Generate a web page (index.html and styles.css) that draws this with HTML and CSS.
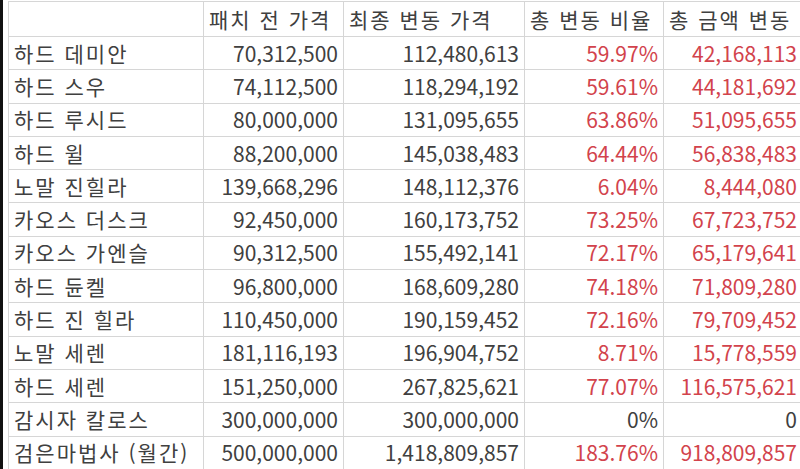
FILE: index.html
```html
<!DOCTYPE html>
<html lang="ko">
<head>
<meta charset="utf-8">
<link rel="stylesheet" href="styles.css">
</head>
<body>
<div class="page">
  <div class="edge"></div>
  <div class="gap"></div>
  <table class="sheet">
    <colgroup>
      <col class="c1"><col class="c2"><col class="c3"><col class="c4"><col class="c5">
    </colgroup>
    <thead>
      <tr><th></th><th>패치 전 가격</th><th>최종 변동 가격</th><th>총 변동 비율</th><th>총 금액 변동</th></tr>
    </thead>
    <tbody>
      <tr><td class="name">하드 데미안</td><td>70,312,500</td><td>112,480,613</td><td class="red">59.97%</td><td class="red">42,168,113</td></tr>
      <tr><td class="name">하드 스우</td><td>74,112,500</td><td>118,294,192</td><td class="red">59.61%</td><td class="red">44,181,692</td></tr>
      <tr><td class="name">하드 루시드</td><td>80,000,000</td><td>131,095,655</td><td class="red">63.86%</td><td class="red">51,095,655</td></tr>
      <tr><td class="name">하드 윌</td><td>88,200,000</td><td>145,038,483</td><td class="red">64.44%</td><td class="red">56,838,483</td></tr>
      <tr><td class="name">노말 진힐라</td><td>139,668,296</td><td>148,112,376</td><td class="red">6.04%</td><td class="red">8,444,080</td></tr>
      <tr><td class="name">카오스 더스크</td><td>92,450,000</td><td>160,173,752</td><td class="red">73.25%</td><td class="red">67,723,752</td></tr>
      <tr><td class="name">카오스 가엔슬</td><td>90,312,500</td><td>155,492,141</td><td class="red">72.17%</td><td class="red">65,179,641</td></tr>
      <tr><td class="name">하드 듄켈</td><td>96,800,000</td><td>168,609,280</td><td class="red">74.18%</td><td class="red">71,809,280</td></tr>
      <tr><td class="name">하드 진 힐라</td><td>110,450,000</td><td>190,159,452</td><td class="red">72.16%</td><td class="red">79,709,452</td></tr>
      <tr><td class="name">노말 세렌</td><td>181,116,193</td><td>196,904,752</td><td class="red">8.71%</td><td class="red">15,778,559</td></tr>
      <tr><td class="name">하드 세렌</td><td>151,250,000</td><td>267,825,621</td><td class="red">77.07%</td><td class="red">116,575,621</td></tr>
      <tr><td class="name">감시자 칼로스</td><td>300,000,000</td><td>300,000,000</td><td>0%</td><td>0</td></tr>
      <tr><td class="name">검은마법사 (월간)</td><td>500,000,000</td><td>1,418,809,857</td><td class="red">183.76%</td><td class="red">918,809,857</td></tr>
    </tbody>
  </table>
</div>
</body>
</html>
```
FILE: styles.css
```css
html, body {
  margin: 0;
  padding: 0;
  background: #ffffff;
  overflow: hidden;
}
.page {
  display: flex;
  width: 800px;
  height: 469px;
  overflow: hidden;
  background: #ffffff;
}
.edge {
  flex: 0 0 3px;
  background: #111111;
}
.gap {
  flex: 0 0 5px;
}
.sheet {
  flex: 0 0 auto;
  table-layout: fixed;
  border-collapse: collapse;
  width: 794px;
  margin-top: 1px;
  font-family: "Noto Sans CJK KR", "Noto Sans", sans-serif;
  font-size: 21px;
  color: #404040;
}
.c1 { width: 195px; }
.c2 { width: 140px; }
.c3 { width: 181px; }
.c4 { width: 139px; }
.c5 { width: 139px; }
.sheet th, .sheet td {
  border: 1px solid #d6d6d6;
  padding: 0 5px;
  white-space: nowrap;
  overflow: visible;
  line-height: 1;
}
.sheet th {
  height: 34px;
  font-weight: normal;
  text-align: left;
  padding-left: 5px;
  letter-spacing: 2px;
}
.sheet td {
  height: 32.3px;
  text-align: right;
}
.sheet td.name {
  text-align: left;
  padding-left: 5px;
  letter-spacing: 2px;
}
.sheet td.red {
  color: #d2434c;
}
```
